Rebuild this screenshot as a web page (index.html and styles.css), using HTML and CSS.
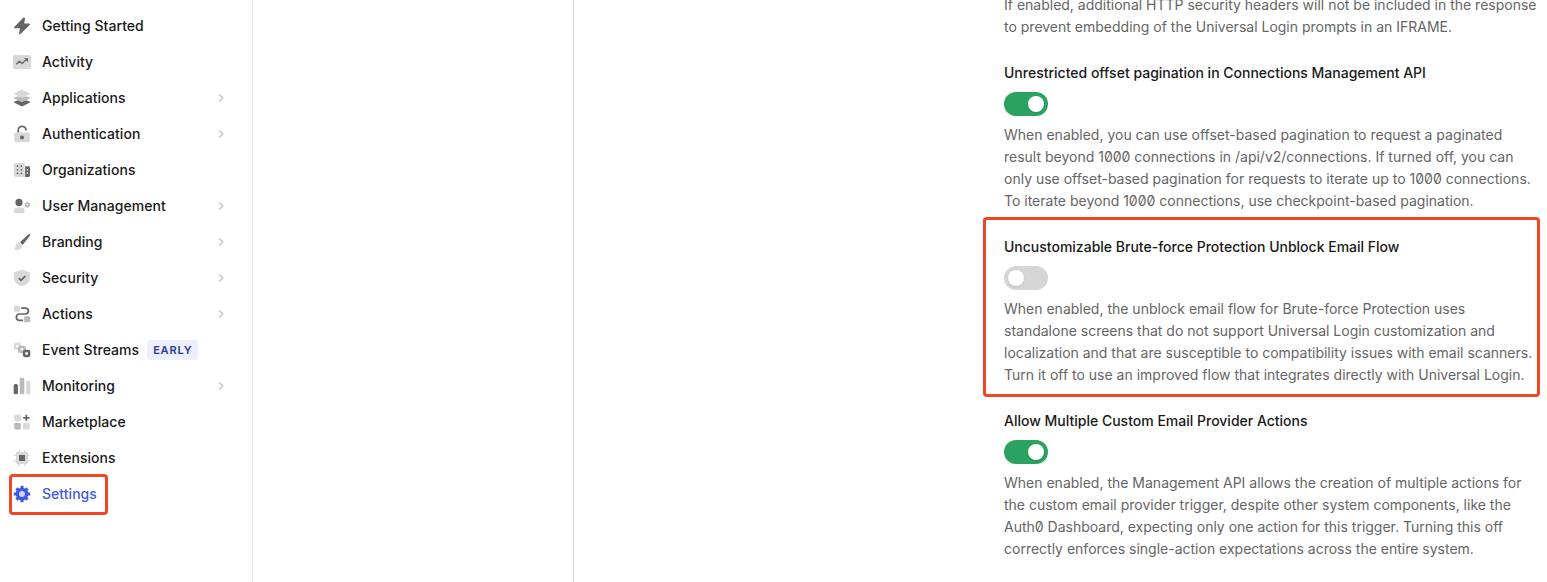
FILE: index.html
```
<!DOCTYPE html>
<html lang="en">

<head>
    <meta charset="UTF-8">
    <meta name="viewport" content="width=device-width, initial-scale=1.0">
    <title>Settings</title>
    <link rel="stylesheet" href="styles.css">
</head>

<body>

    <nav class="sidebar">
        <a class="nav-item">
            <svg class="icon" viewBox="0 0 20 20"><path class="dark" d="M11 2 2.3 10.9c-.5.6-.2 1.3.5 1.3h5.1L7.1 17.4c-.1.9.8 1.2 1.4.6l9.1-9.1c.6-.6.3-1.4-.5-1.4h-4.9l.8-4.9c.1-1-1.2-1.5-2-.6z"/></svg>
            <span>Getting Started</span>
        </a>
        <a class="nav-item">
            <svg class="icon" viewBox="0 0 20 20"><rect class="light" x="1" y="3" width="18.2" height="14" rx="1.5"/><path class="dark-line thin" d="M4.2 12.2 7.3 9.2l2.8 2.3 4-3.8"/><path class="dark" d="M12 6.3h4v4z"/></svg>
            <span>Activity</span>
        </a>
        <a class="nav-item">
            <svg class="icon" viewBox="0 0 20 20"><path class="dark" d="m2 13.8 3-1.3h10l3 1.3v.7l-7.4 3.7q-.6.3-1.2 0L2 14.5z"/><path class="mid" d="m2 9.6 3-1.2h10l3 1.2v.7l-7.4 3.7q-.6.3-1.2 0L2 10.3z"/><path class="light" d="m2 5.4 7.4-3.6q.6-.3 1.2 0L18 5.4v.7l-7.4 3.7q-.6.3-1.2 0L2 6.1z"/></svg>
            <span>Applications</span>
            <svg class="chevron" viewBox="0 0 10 10"><path d="m3.1 1.4 3.8 3.6-3.8 3.6"/></svg>
        </a>
        <a class="nav-item">
            <svg class="icon" viewBox="0 0 20 20"><rect class="light" x="2.2" y="8.4" width="15.6" height="9.9" rx="1.5"/><path class="dark-line" d="M6.2 8.4V6.2a3.9 3.9 0 0 1 7.8 0v.4"/><circle class="dark" cx="10" cy="13.4" r="2"/></svg>
            <span>Authentication</span>
            <svg class="chevron" viewBox="0 0 10 10"><path d="m3.1 1.4 3.8 3.6-3.8 3.6"/></svg>
        </a>
        <a class="nav-item">
            <svg class="icon" viewBox="0 0 20 20"><path class="light" d="M3.5 3h8q1.3 0 1.3 1.3V17H3.5Q2 17 2 15.6V4.4Q2 3 3.5 3z"/><path class="dark" d="M13.2 6.2h3.4q1.4 0 1.4 1.4v8q0 1.4-1.4 1.4h-3.4z"/><path class="dark-line dots" d="M5.5 6.2v.01M5.5 9.8v.01M5.5 13.4v.01M9.4 6.2v.01M9.4 9.8v.01M9.4 13.4v.01"/><path class="light-line dots" d="M15.5 9.8v.01M15.5 13.2v.01"/></svg>
            <span>Organizations</span>
        </a>
        <a class="nav-item">
            <svg class="icon" viewBox="0 0 20 20"><circle class="dark" cx="7" cy="6.4" r="3.6"/><path class="light" d="M5.5 11.4h3.4q3.8 0 3.8 4.3 0 1.2-1.2 1.2H3q-1.2 0-1.2-1.2 0-4.3 3.7-4.3z"/><circle class="mid-line" cx="15.3" cy="8.7" r="1.7"/><path class="mid-line thin" d="M15.3 5.8v1M15.3 10.6v1M12.7 7.3l.9.5M17 9.6l.9.5M12.7 10.1l.9-.5M17 7.8l.9-.5"/></svg>
            <span>User Management</span>
            <svg class="chevron" viewBox="0 0 10 10"><path d="m3.1 1.4 3.8 3.6-3.8 3.6"/></svg>
        </a>
        <a class="nav-item">
            <svg class="icon" viewBox="0 0 20 20"><path class="dark" d="M8.2 10.1 15.7 3q1.4-1.3 2.2-1 .7.3-.2 1.9L11 12.5q-.5.3-1.4-.5-.9-1-1.4-1.9z"/><path class="light" d="M7.3 10.8q1 2.1 2.9 2.5-.4 4.9-5.3 4.9-1.8 0-3.1-.7 1.5-.5 1.7-2.7.3-3.8 3.8-4z"/></svg>
            <span>Branding</span>
            <svg class="chevron" viewBox="0 0 10 10"><path d="m3.1 1.4 3.8 3.6-3.8 3.6"/></svg>
        </a>
        <a class="nav-item">
            <svg class="icon" viewBox="0 0 20 20"><path class="light" d="m10 1.7 7.2 2.2q.8.3.8 1.1V10q0 5.5-7.4 8.1-.6.2-1.2 0Q2 15.5 2 10V5q0-.8.8-1.1z"/><path class="dark-line" d="m6.7 10.2 2.3 2.2 4.3-4.3"/></svg>
            <span>Security</span>
            <svg class="chevron" viewBox="0 0 10 10"><path d="m3.1 1.4 3.8 3.6-3.8 3.6"/></svg>
        </a>
        <a class="nav-item">
            <svg class="icon" viewBox="0 0 20 20"><rect class="light" x="2" y="1.8" width="6" height="6" rx="1"/><rect class="mid" x="12.2" y="12.2" width="6" height="6" rx="1"/><path class="dark-line" d="M9.2 4.2h4.3a2.9 2.9 0 0 1 0 5.8H7a3.2 3.2 0 0 0 0 6.3h4"/></svg>
            <span>Actions</span>
            <svg class="chevron" viewBox="0 0 10 10"><path d="m3.1 1.4 3.8 3.6-3.8 3.6"/></svg>
        </a>
        <a class="nav-item">
            <svg class="icon" viewBox="0 0 20 20"><rect class="light-line heavy" x="3.1" y="3.9" width="4.8" height="4.5" rx=".8"/><rect class="mid-line heavy" x="7.3" y="7.1" width="5.2" height="4.7" rx=".8"/><rect class="dark-line heavy" x="12.1" y="10.9" width="5" height="5" rx=".8"/></svg>
            <span>Event Streams</span>
            <b class="badge">EARLY</b>
        </a>
        <a class="nav-item">
            <svg class="icon" viewBox="0 0 20 20"><rect class="dark" x="1.7" y="8" width="4.2" height="10.3" rx="1.5"/><rect class="mid" x="7.7" y="1.8" width="4.6" height="16.5" rx="1.5"/><rect class="light" x="14.1" y="4.8" width="4.2" height="13.5" rx="1.5"/></svg>
            <span>Monitoring</span>
            <svg class="chevron" viewBox="0 0 10 10"><path d="m3.1 1.4 3.8 3.6-3.8 3.6"/></svg>
        </a>
        <a class="nav-item">
            <svg class="icon" viewBox="0 0 20 20"><rect class="light" x="2.3" y="2.7" width="6.5" height="6.5" rx="1.3"/><rect class="mid" x="2.3" y="11" width="6.5" height="6.5" rx="1.3"/><rect class="light" x="11" y="11" width="6.5" height="6.5" rx="1.3"/><path class="dark-line" d="M14.3 2.7v6.2M11.2 5.8h6.2"/></svg>
            <span>Marketplace</span>
        </a>
        <a class="nav-item">
            <svg class="icon" viewBox="0 0 20 20"><rect class="light" x="4" y="4" width="12" height="12" rx="1"/><path class="light-line thin" d="M7.3 2v16M12.7 2v16M2 7.3h16M2 12.7h16"/><rect class="dark" x="7" y="7" width="6" height="6"/></svg>
            <span>Extensions</span>
        </a>
        <a class="nav-item active">
            <svg class="icon" viewBox="0 0 20 20"><circle cx="10" cy="10" r="6.3"/><path class="teeth" d="M10 1.8v16.4M1.8 10h16.4M4.4 4.4l11.2 11.2M15.6 4.4 4.4 15.6"/><circle class="hub" cx="10" cy="10" r="3"/></svg>
            <span>Settings</span>
        </a>
    </nav>

    <div class="subnav"></div>

    <main class="content">
        <section class="setting">
            <p>If enabled, additional HTTP security headers will not be included in the response to prevent embedding of the Universal Login prompts in an IFRAME.</p>
        </section>
        <section class="setting">
            <h2>Unrestricted offset pagination in Connections Management API</h2>
            <div class="toggle on"></div>
            <p>When enabled, you can use offset-based pagination to request a paginated result beyond 1000 connections in /api/v2/connections. If turned off, you can only use offset-based pagination for requests to iterate up to 1000 connections. To iterate beyond 1000 connections, use checkpoint-based pagination.</p>
        </section>
        <section class="setting highlighted">
            <h2>Uncustomizable Brute-force Protection Unblock Email Flow</h2>
            <div class="toggle"></div>
            <p>When enabled, the unblock email flow for Brute-force Protection uses standalone screens that do not support Universal Login customization and localization and that are susceptible to compatibility issues with email scanners. Turn it off to use an improved flow that integrates directly with Universal Login.</p>
        </section>
        <section class="setting">
            <h2>Allow Multiple Custom Email Provider Actions</h2>
            <div class="toggle on"></div>
            <p>When enabled, the Management API allows the creation of multiple actions for the custom email provider trigger, despite other system components, like the Auth0 Dashboard, expecting only one action for this trigger. Turning this off correctly enforces single-action expectations across the entire system.</p>
        </section>
    </main>

</body>

</html>
```
FILE: styles.css
```
*,
*::before,
*::after {
    box-sizing: border-box;
}

body {
    display: flex;
    height: 582px;
    margin: 0;
    overflow: hidden;
    background-color: #fff;
    color: #191919;
    font-family: Inter, "Liberation Sans", sans-serif;
    font-size: 14px;
    font-feature-settings: "zero";
}

/* Sidebar */
.sidebar {
    width: 253px;
    padding: 8px 26px 0 12px;
    border-right: 1px solid #e3e3e3;
}

.nav-item {
    position: relative;
    display: flex;
    align-items: center;
    height: 36px;
    font-weight: 500;
    letter-spacing: 0.04px;
}

.nav-item span {
    padding-bottom: 2px;
}

.icon {
    width: 20px;
    height: 20px;
    margin-right: 10px;
}

.chevron {
    width: 10px;
    height: 10px;
    margin-left: auto;
    fill: none;
    stroke: #bdbdbd;
    stroke-width: 1.1;
}

.dark {
    fill: #656565;
}

.mid {
    fill: #b9b9b9;
}

.light {
    fill: #d8d8d8;
}

.dark-line,
.mid-line,
.light-line {
    fill: none;
    stroke-width: 1.7;
}

.dark-line {
    stroke: #656565;
}

.mid-line {
    stroke: #b9b9b9;
}

.light-line {
    stroke: #d8d8d8;
}

.thin {
    stroke-width: 1.3;
}

.heavy {
    stroke-width: 2.5;
}

.dots {
    stroke-width: 1.7;
    stroke-linecap: round;
}

.badge {
    height: 20px;
    margin-left: 8px;
    padding: 0 6px;
    border-radius: 3px;
    background-color: #eceffe;
    color: #2a3a94;
    font-size: 11px;
    font-weight: 600;
    line-height: 20px;
    letter-spacing: 0.8px;
}

.active {
    color: #3f59e4;
}

.active .icon {
    fill: #3f59e4;
}

.active .teeth {
    stroke: #3f59e4;
    stroke-width: 3;
}

.active .hub {
    fill: #cdd4f8;
}

/* Red markers around the highlighted options */
.active::after,
.highlighted::after {
    content: "";
    position: absolute;
    border: 3px solid #f14624;
    border-radius: 4px;
}

.active::after {
    top: -2px;
    left: -3px;
    width: 99px;
    height: 41px;
}

/* Content */
.subnav {
    width: 321px;
    border-right: 1px solid #d5d5d5;
}

.content {
    display: flex;
    flex-direction: column;
    gap: 24px;
    width: 536px;
    margin: -6px 0 0 430px;
}

.setting {
    position: relative;
}

.setting h2 {
    margin: 0 0 8px;
    font-size: 14px;
    font-weight: 500;
    line-height: 22px;
}

.setting p {
    margin: 0;
    color: #656565;
    line-height: 22px;
}

.toggle {
    width: 44px;
    height: 24px;
    margin-bottom: 8px;
    padding: 4px;
    border-radius: 12px;
    background-color: #d6d6d6;
}

.toggle::before {
    content: "";
    display: block;
    width: 16px;
    height: 16px;
    border-radius: 50%;
    background-color: #fff;
    box-shadow: 0 1px 2px rgba(0, 0, 0, 0.12);
}

.toggle.on {
    background-color: #2ca261;
}

.toggle.on::before {
    margin-left: auto;
}

.highlighted::after {
    top: -19px;
    left: -21px;
    width: 557px;
    height: 180px;
}
```
